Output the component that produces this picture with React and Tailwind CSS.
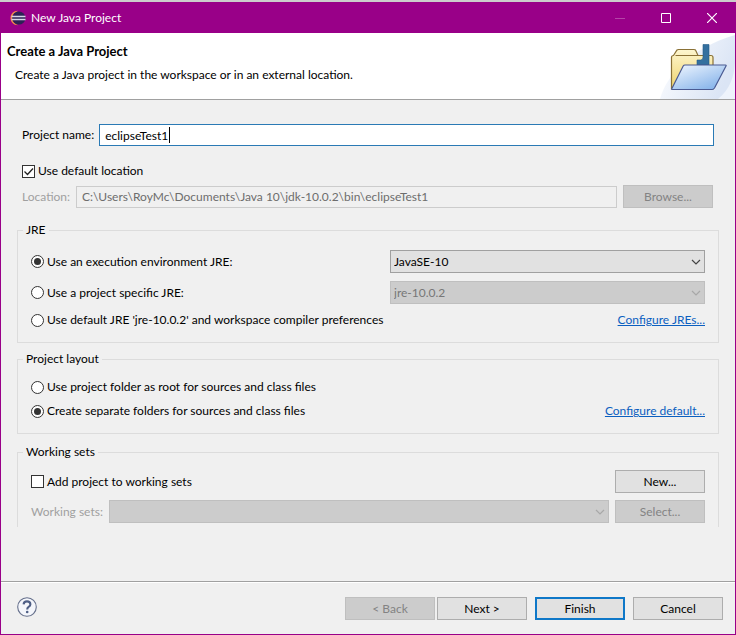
import { useState } from 'react'
import clsx from 'clsx'

function EclipseLogo() {
  return (
    <svg className="w-4 h-4" viewBox="0 0 16 16" aria-hidden="true">
      <path d="M8 0.800C3.500 0.800 0.500 4 0.500 8S3.500 15.200 8 15.200L5 13C3 11.500 2.600 9.500 2.600 8S3 4.500 5 3z" fill="#f08a4a" />
      <circle cx="8.800" cy="8" r="6.600" fill="#2c2255" />
      <path d="M1.500 6.500h14M1.500 9.500h14" stroke="#d8d4e8" strokeWidth="1.400" />
    </svg>
  )
}

function WizardBanner() {
  return (
    <svg className="w-[75px] h-[66px] shrink-0" viewBox="0 0 75 66" aria-hidden="true">
      <defs>
        <linearGradient id="wash" x1="0" y1="0" x2="1" y2="0.4">
          <stop offset="0" stopColor="#ffffff" />
          <stop offset="0.3" stopColor="#f4f7fc" />
          <stop offset="1" stopColor="#dbe5f5" />
        </linearGradient>
        <linearGradient id="back" x1="0" y1="0" x2="0" y2="1">
          <stop offset="0" stopColor="#fdf6cf" />
          <stop offset="1" stopColor="#efd36c" />
        </linearGradient>
        <linearGradient id="front" x1="0" y1="0" x2="0.8" y2="1">
          <stop offset="0" stopColor="#f2f8ff" />
          <stop offset="1" stopColor="#84b2ea" />
        </linearGradient>
      </defs>
      <path d="M0 66C6 44 28 16 75 2V66z" fill="url(#wash)" />
      <path d="M58 66C70 56 74 44 75 30V66z" fill="#eef3fb" />
      <path d="M11.500 56V24.500Q11.500 22.500 13.500 22.500L17 17Q17.500 16.500 18.500 16.500H34Q35 16.500 35.500 17L38 22.500H51Q53 22.500 53 24.500V56z" fill="url(#back)" stroke="#8a7136" strokeWidth="1.200" />
      <path d="M15.500 22.500H38" stroke="#8a7136" strokeWidth="1" />
      <path d="M43 11.500h6V32H37v-5h3.500q2.500 0 2.500-3z" fill="#34709f" stroke="#245b88" strokeWidth="0.600" />
      <path d="M25 32H65.500Q66.500 32 66 33L54.500 55Q53.500 56.500 52 56.500H12.500Q11.300 56.500 12 55.200L23.200 33Q23.800 32 25 32z" fill="url(#front)" stroke="#4a5a92" strokeWidth="1.200" />
    </svg>
  )
}

function TitleBar() {
  return (
    <div className="flex h-[31px] items-center bg-[#990088] pl-[9px] text-white">
      <EclipseLogo />
      <h1 className="ml-[5px] flex-1">New Java Project</h1>
      <button type="button" aria-label="Minimize" disabled className="flex h-full w-[46px] items-center justify-center text-[#b545a8]">
        <svg className="w-[10px] h-[10px]" viewBox="0 0 10 10" stroke="currentColor"><path d="M0 5.500h10" /></svg>
      </button>
      <button type="button" aria-label="Maximize" className="flex h-full w-[46px] items-center justify-center">
        <svg className="w-[10px] h-[10px]" viewBox="0 0 10 10" fill="none" stroke="currentColor"><path d="M.5.5h9v9h-9z" /></svg>
      </button>
      <button type="button" aria-label="Close" className="flex h-full w-[46px] items-center justify-center">
        <svg className="w-[10px] h-[10px]" viewBox="0 0 10 10" fill="none" stroke="currentColor" strokeWidth="1.200"><path d="M0 0l10 10M10 0L0 10" /></svg>
      </button>
    </div>
  )
}

function Button({ primary, className, ...props }) {
  return (
    <button
      type="button"
      className={clsx(
        'h-[23px] w-[90px] shrink-0 disabled:border-[#bfbfbf] disabled:bg-[#cccccc] disabled:text-[#838383]',
        primary ? 'border-2 border-[#0f78c8] bg-[#e1e1e1]' : 'border border-[#adadad] bg-[#e1e1e1]',
        className,
      )}
      {...props}
    />
  )
}

function Radio({ label, ...props }) {
  return (
    <label className="flex items-center gap-[3px]">
      <input
        type="radio"
        className="flex h-[13px] w-[13px] shrink-0 appearance-none items-center justify-center rounded-full border border-[#333333] bg-white before:h-[7px] before:w-[7px] before:rounded-full checked:before:bg-[#333333]"
        {...props}
      />
      {label}
    </label>
  )
}

function Checkbox({ label, ...props }) {
  return (
    <label className="flex items-center gap-[3px]">
      <span className="relative h-[13px] w-[13px]">
        <input type="checkbox" className="peer block h-[13px] w-[13px] appearance-none border border-[#333333] bg-white" {...props} />
        <svg className="pointer-events-none absolute inset-0 hidden peer-checked:block" viewBox="0 0 13 13" fill="none" stroke="#222222" strokeWidth="1.300">
          <path d="M2.500 6.500l3 3 5.500-6" />
        </svg>
      </span>
      {label}
    </label>
  )
}

function Select({ className, children, ...props }) {
  return (
    <div className={clsx('relative', className)}>
      <select
        className="block h-[23px] w-full appearance-none border border-[#a0a0a0] bg-[#e1e1e1] pl-[3px] pr-6 opacity-100 disabled:border-[#bfbfbf] disabled:bg-[#cccccc] disabled:text-[#777777]"
        {...props}
      >
        {children}
      </select>
      <svg className={clsx('pointer-events-none absolute right-1 top-2 h-2 w-[10px]', props.disabled ? 'text-[#a8a8a8]' : 'text-[#444444]')} viewBox="0 0 10 8" fill="none" stroke="currentColor" strokeWidth="1.200">
        <path d="M1 2l4 4 4-4" />
      </svg>
    </div>
  )
}

function Group({ title, className, children }) {
  return (
    <fieldset className={clsx('border border-[#dcdcdc] px-[13px]', className)}>
      <legend className="-ml-2 px-[3px]">{title}</legend>
      {children}
    </fieldset>
  )
}

export default function App() {
  const [name, setName] = useState('eclipseTest1')
  const [useDefault, setUseDefault] = useState(true)
  const [jre, setJre] = useState('env')
  const [layout, setLayout] = useState('separate')
  const [inSets, setInSets] = useState(false)

  return (
    <div className="flex min-h-screen flex-col border-t-2 border-[#cccccc] font-[Lato,sans-serif] text-[12px] leading-4 text-black">
      <div className="flex flex-1 flex-col border-x border-b border-[#990088] bg-[#f0f0f0]">
        <TitleBar />

        <header className="flex justify-between border-b border-[#a0a0a0] bg-white">
          <div className="pl-[6px] pt-[10px]">
            <h2 className="text-[13px] font-bold">Create a Java Project</h2>
            <p className="mt-2 pl-2">Create a Java project in the workspace or in an external location.</p>
          </div>
          <WizardBanner />
        </header>

        <main className="flex-1 px-4 pt-6">
          <div className="flex items-center gap-[5px] px-[5px]">
            <label htmlFor="name">Project name:</label>
            <div className="relative flex-1">
              <input
                id="name"
                value={name}
                onChange={e => setName(e.target.value)}
                className="block h-[22px] w-full border border-[#2a7ab5] bg-white px-[5px] outline-none caret-transparent"
              />
              <span className="pointer-events-none absolute top-[3px] bottom-[3px] left-[70px] w-px bg-black" />
            </div>
          </div>

          <div className="mt-[17px] flex px-[5px]">
            <Checkbox label="Use default location" checked={useDefault} onChange={e => setUseDefault(e.target.checked)} />
          </div>

          <div className="mt-[6px] flex items-center gap-[6px] pr-[6px] pl-[5px]">
            <label htmlFor="location" className="text-[#a0a0a0]">Location:</label>
            <input
              id="location"
              disabled={useDefault}
              defaultValue="C:\Users\RoyMc\Documents\Java 10\jdk-10.0.2\bin\eclipseTest1"
              className="h-[22px] min-w-0 flex-1 border border-[#cccccc] px-[5px] text-[#6d6d6d]"
            />
            <Button disabled={useDefault}>Browse...</Button>
          </div>

          <Group title="JRE" className="mt-[14px] pb-[14px]">
            <div className="mt-3 flex items-center justify-between">
              <Radio name="jre" label="Use an execution environment JRE:" checked={jre === 'env'} onChange={() => setJre('env')} />
              <Select className="w-[315px]" aria-label="Execution environment" disabled={jre !== 'env'}>
                <option>JavaSE-10</option>
              </Select>
            </div>
            <div className="mt-2 flex items-center justify-between">
              <Radio name="jre" label="Use a project specific JRE:" checked={jre === 'project'} onChange={() => setJre('project')} />
              <Select className="w-[315px]" aria-label="Project JRE" disabled={jre !== 'project'}>
                <option>jre-10.0.2</option>
              </Select>
            </div>
            <div className="mt-2 flex items-center justify-between">
              <Radio name="jre" label="Use default JRE 'jre-10.0.2' and workspace compiler preferences" checked={jre === 'default'} onChange={() => setJre('default')} />
              <a href="#jres" className="text-[#0b5fc0] underline">Configure JREs...</a>
            </div>
          </Group>

          <Group title="Project layout" className="mt-2 pb-[14px]">
            <div className="mt-3">
              <Radio name="layout" label="Use project folder as root for sources and class files" checked={layout === 'root'} onChange={() => setLayout('root')} />
            </div>
            <div className="mt-2 flex items-center justify-between">
              <Radio name="layout" label="Create separate folders for sources and class files" checked={layout === 'separate'} onChange={() => setLayout('separate')} />
              <a href="#layout" className="text-[#0b5fc0] underline">Configure default...</a>
            </div>
          </Group>

          <Group title="Working sets" className="mt-[10px] border-b-0 pb-1">
            <div className="mt-[10px] flex items-center justify-between">
              <Checkbox label="Add project to working sets" checked={inSets} onChange={e => setInSets(e.target.checked)} />
              <Button>New...</Button>
            </div>
            <div className="mt-[7px] flex items-center gap-[6px]">
              <label htmlFor="sets" className="text-[#a0a0a0]">Working sets:</label>
              <Select id="sets" className="flex-1" disabled={!inSets} />
              <Button disabled={!inSets}>Select...</Button>
            </div>
          </Group>
        </main>

        <footer className="border-t border-[#a0a0a0]">
          <div className="flex items-start border-t border-white pt-[14px] pr-3 pb-[14px] pl-4">
            <button type="button" aria-label="Help" className="flex h-5 w-5 items-center justify-center">
              <svg className="h-5 w-5" viewBox="0 0 20 20" fill="none" aria-hidden="true">
                <circle cx="10" cy="10" r="9.300" fill="#f4f6fb" stroke="#66708c" strokeWidth="1.100" />
                <path d="M6.600 7.400Q6.800 4.400 10 4.400T13.400 7.200Q13.400 8.800 11.600 9.900Q10.200 10.800 10.200 12.400" stroke="#4f5f86" strokeWidth="2.100" />
                <circle cx="10.200" cy="15" r="1.300" fill="#4f5f86" />
              </svg>
            </button>
            <div className="ml-auto flex gap-2">
              <div className="flex gap-[2px]">
                <Button disabled>&lt; Back</Button>
                <Button>Next &gt;</Button>
              </div>
              <Button primary>Finish</Button>
              <Button>Cancel</Button>
            </div>
          </div>
        </footer>
      </div>
    </div>
  )
}
